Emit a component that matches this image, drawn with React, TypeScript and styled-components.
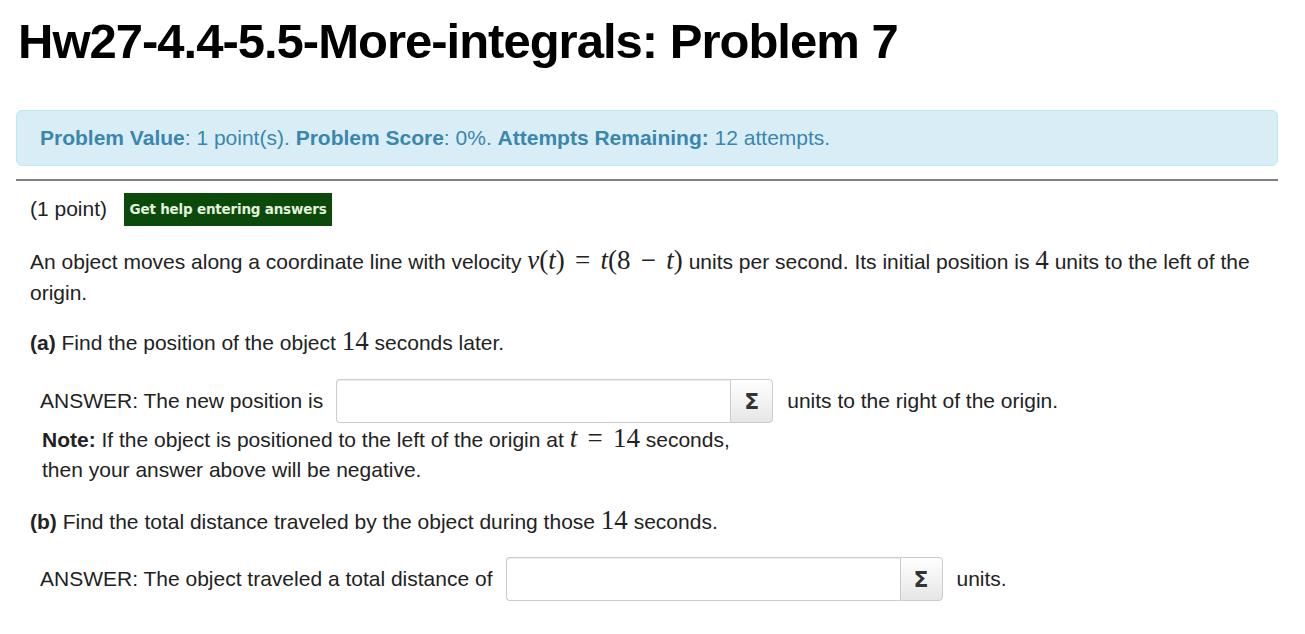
import React from "react";
import styled, { createGlobalStyle } from "styled-components";

const GlobalStyle = createGlobalStyle`
    html, body {
        margin: 0;
        padding: 0;
        background: #ffffff;
    }
    body {
        font-family: "Liberation Sans", Arial, sans-serif;
        font-size: 21px;
        color: #222222;
    }
`;

const Page = styled.div`
    padding: 0 27px 0 16px;
`;

const Title = styled.h1`
    margin: 0;
    padding: 14px 0 0 2px;
    height: 110px;
    box-sizing: border-box;
    font-size: 49px;
    font-weight: bold;
    letter-spacing: -1px;
    line-height: 54px;
    color: #000000;
`;

const Alert = styled.div`
    display: flex;
    align-items: center;
    height: 56px;
    box-sizing: border-box;
    padding: 0 23px;
    background: #d9edf7;
    border: 1px solid #bce8f1;
    border-radius: 6px;
    color: #3a87ad;
    font-size: 21px;
`;

const Strong = styled.b`
    font-weight: bold;
`;

const Rule = styled.hr`
    margin: 13px 0 0;
    border: 0;
    border-top: 2px solid #808080;
`;

const Body = styled.div`
    padding: 0 14px;
`;

const PointRow = styled.div`
    display: flex;
    align-items: center;
    gap: 17px;
    margin-top: 11px;
    height: 34px;
`;

const HelpButton = styled.span`
    display: inline-flex;
    align-items: center;
    justify-content: center;
    width: 208px;
    height: 33px;
    box-sizing: border-box;
    background: #0b4a0b;
    color: #e3f2dc;
    font-family: "DejaVu Sans", Verdana, sans-serif;
    font-size: 13.5px;
    font-weight: bold;
    letter-spacing: -0.2px;
`;

const Para = styled.p<{ $top: number }>`
    margin: ${(p) => p.$top}px 0 0;
    line-height: 31px;
`;

const Math = styled.span`
    font-family: "Liberation Serif", "DejaVu Serif", serif;
    font-size: 27px;
`;

const V = styled.i`
    font-style: italic;
`;

const Op = styled.span`
    padding: 0 0.38em;
`;

const AnswerRow = styled.div<{ $top: number }>`
    display: flex;
    align-items: center;
    margin-top: ${(p) => p.$top}px;
    padding-left: 10px;
    height: 44px;
`;

const Label = styled.span`
    margin-right: 13px;
`;

const InputBox = styled.div`
    width: 394px;
    height: 44px;
    box-sizing: border-box;
    border: 1px solid #cccccc;
    border-right: 0;
    border-radius: 4px 0 0 4px;
    box-shadow: inset 0 1px 1px rgba(0, 0, 0, 0.075);
    background: #ffffff;
`;

const SigmaButton = styled.span`
    display: flex;
    align-items: center;
    justify-content: center;
    width: 43px;
    height: 44px;
    box-sizing: border-box;
    border: 1px solid #cccccc;
    border-radius: 0 4px 4px 0;
    background: linear-gradient(#ffffff, #e6e6e6);
    color: #333333;
    font-family: "DejaVu Sans", sans-serif;
    font-size: 22px;
    font-weight: bold;
    margin-right: 14px;
`;

const Note = styled.div`
    padding-left: 12px;
    line-height: 30px;
`;

const Answer = ({ label, after, top }: { label: string; after: string; top: number }) => (
    <AnswerRow $top={top}>
        <Label>{label}</Label>
        <InputBox />
        <SigmaButton>Σ</SigmaButton>
        <span>{after}</span>
    </AnswerRow>
);

export default function App() {
    return (
        <Page>
            <GlobalStyle />
            <Title>Hw27-4.4-5.5-More-integrals: Problem 7</Title>
            <Alert>
                <span>
                    <Strong>Problem Value</Strong>: 1 point(s). <Strong>Problem Score</Strong>: 0%.{" "}
                    <Strong>Attempts Remaining:</Strong> 12 attempts.
                </span>
            </Alert>
            <Rule />
            <Body>
                <PointRow>
                    <span>(1 point)</span>
                    <HelpButton>Get help entering answers</HelpButton>
                </PointRow>
                <Para $top={19}>
                    An object moves along a coordinate line with velocity{" "}
                    <Math>
                        <V>v</V>(<V>t</V>)<Op>=</Op><V>t</V>(8<Op>−</Op><V>t</V>)
                    </Math>{" "}
                    units per second. Its initial position is <Math>4</Math> units to the left of the
                    origin.
                </Para>
                <Para $top={18}>
                    <Strong>(a)</Strong> Find the position of the object <Math>14</Math> seconds later.
                </Para>
                <Answer top={21} label="ANSWER: The new position is" after="units to the right of the origin." />
                <Note>
                    <Strong>Note:</Strong> If the object is positioned to the left of the origin at{" "}
                    <Math>
                        <V>t</V>
                        <Op>=</Op>14
                    </Math>{" "}
                    seconds,
                    <br />
                    then your answer above will be negative.
                </Note>
                <Para $top={20}>
                    <Strong>(b)</Strong> Find the total distance traveled by the object during those{" "}
                    <Math>14</Math> seconds.
                </Para>
                <Answer top={20} label="ANSWER: The object traveled a total distance of" after="units." />
            </Body>
        </Page>
    );
}
